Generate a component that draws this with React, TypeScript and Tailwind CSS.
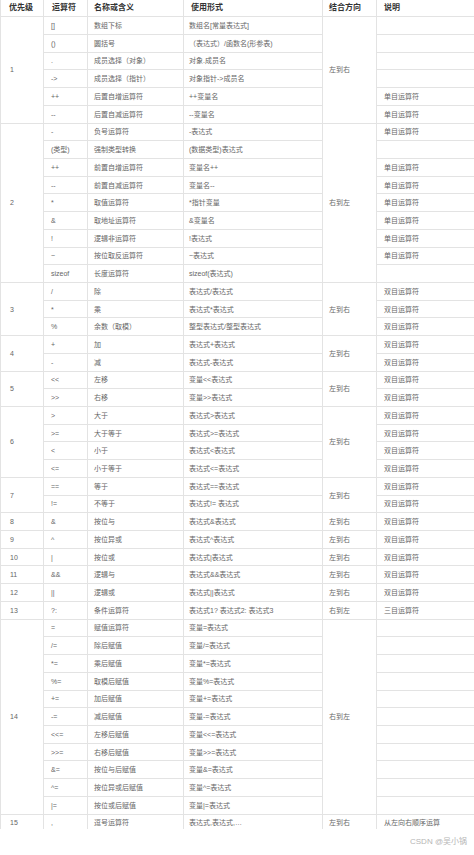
import React from "react";

type Row = [string, string, string, string];

interface Group {
  level: string;
  dir: string;
  rows: Row[];
}

const groups: Group[] = [
  {
    level: "1",
    dir: "左到右",
    rows: [
      ["[]", "数组下标", "数组名[常量表达式]", ""],
      ["()", "圆括号", "（表达式）/函数名(形参表)", ""],
      [".", "成员选择（对象）", "对象.成员名", ""],
      ["->", "成员选择（指针）", "对象指针->成员名", ""],
      ["++", "后置自增运算符", "++变量名", "单目运算符"],
      ["--", "后置自减运算符", "--变量名", "单目运算符"],
    ],
  },
  {
    level: "2",
    dir: "右到左",
    rows: [
      ["-", "负号运算符", "-表达式", "单目运算符"],
      ["(类型)", "强制类型转换", "(数据类型)表达式", ""],
      ["++", "前置自增运算符", "变量名++", "单目运算符"],
      ["--", "前置自减运算符", "变量名--", "单目运算符"],
      ["*", "取值运算符", "*指针变量", "单目运算符"],
      ["&", "取地址运算符", "&变量名", "单目运算符"],
      ["!", "逻辑非运算符", "!表达式", "单目运算符"],
      ["~", "按位取反运算符", "~表达式", "单目运算符"],
      ["sizeof", "长度运算符", "sizeof(表达式)", ""],
    ],
  },
  {
    level: "3",
    dir: "左到右",
    rows: [
      ["/", "除", "表达式/表达式", "双目运算符"],
      ["*", "乘", "表达式*表达式", "双目运算符"],
      ["%", "余数（取模）", "整型表达式/整型表达式", "双目运算符"],
    ],
  },
  {
    level: "4",
    dir: "左到右",
    rows: [
      ["+", "加", "表达式+表达式", "双目运算符"],
      ["-", "减", "表达式-表达式", "双目运算符"],
    ],
  },
  {
    level: "5",
    dir: "左到右",
    rows: [
      ["<<", "左移", "变量<<表达式", "双目运算符"],
      [">>", "右移", "变量>>表达式", "双目运算符"],
    ],
  },
  {
    level: "6",
    dir: "左到右",
    rows: [
      [">", "大于", "表达式>表达式", "双目运算符"],
      [">=", "大于等于", "表达式>=表达式", "双目运算符"],
      ["<", "小于", "表达式<表达式", "双目运算符"],
      ["<=", "小于等于", "表达式<=表达式", "双目运算符"],
    ],
  },
  {
    level: "7",
    dir: "左到右",
    rows: [
      ["==", "等于", "表达式==表达式", "双目运算符"],
      ["!=", "不等于", "表达式!= 表达式", "双目运算符"],
    ],
  },
  { level: "8", dir: "左到右", rows: [["&", "按位与", "表达式&表达式", "双目运算符"]] },
  { level: "9", dir: "左到右", rows: [["^", "按位异或", "表达式^表达式", "双目运算符"]] },
  { level: "10", dir: "左到右", rows: [["|", "按位或", "表达式|表达式", "双目运算符"]] },
  { level: "11", dir: "左到右", rows: [["&&", "逻辑与", "表达式&&表达式", "双目运算符"]] },
  { level: "12", dir: "左到右", rows: [["||", "逻辑或", "表达式||表达式", "双目运算符"]] },
  {
    level: "13",
    dir: "右到左",
    rows: [["?:", "条件运算符", "表达式1? 表达式2: 表达式3", "三目运算符"]],
  },
  {
    level: "14",
    dir: "右到左",
    rows: [
      ["=", "赋值运算符", "变量=表达式", ""],
      ["/=", "除后赋值", "变量/=表达式", ""],
      ["*=", "乘后赋值", "变量*=表达式", ""],
      ["%=", "取模后赋值", "变量%=表达式", ""],
      ["+=", "加后赋值", "变量+=表达式", ""],
      ["-=", "减后赋值", "变量-=表达式", ""],
      ["<<=", "左移后赋值", "变量<<=表达式", ""],
      [">>=", "右移后赋值", "变量>>=表达式", ""],
      ["&=", "按位与后赋值", "变量&=表达式", ""],
      ["^=", "按位异或后赋值", "变量^=表达式", ""],
      ["|=", "按位或后赋值", "变量|=表达式", ""],
    ],
  },
  {
    level: "15",
    dir: "左到右",
    rows: [[",", "逗号运算符", "表达式,表达式,…", "从左向右顺序运算"]],
  },
];

const cell = "border border-[#e3e3e3] px-[6px] py-0 text-left align-middle whitespace-nowrap overflow-hidden";

export default function App() {
  return (
    <div className="w-[474px] bg-white font-['Liberation_Sans','Noto_Sans_CJK_SC',sans-serif] text-[#666]">
      <div className="h-[829px] overflow-hidden">
        <table className="w-[474px] table-fixed border-collapse text-[7px] leading-none">
          <colgroup>
            <col className="w-[43px]" />
            <col className="w-[44px]" />
            <col className="w-[96px]" />
            <col className="w-[139px]" />
            <col className="w-[54px]" />
            <col className="w-[98px]" />
          </colgroup>
          <thead>
            <tr className="h-[16.7px] text-[8px] font-bold text-[#333]">
              <th className={`${cell} border-t-0 pl-[8px]`}>优先级</th>
              <th className={`${cell} border-t-0 pl-[8px]`}>运算符</th>
              <th className={`${cell} border-t-0`}>名称或含义</th>
              <th className={`${cell} border-t-0 pl-[7px]`}>使用形式</th>
              <th className={`${cell} border-t-0`}>结合方向</th>
              <th className={`${cell} border-t-0 pl-[7px]`}>说明</th>
            </tr>
          </thead>
          <tbody>
            {groups.map((g) =>
              g.rows.map((r, i) => (
                <tr key={g.level + "-" + i} className="h-[17.72px]">
                  {i === 0 && (
                    <td rowSpan={g.rows.length} className={`${cell} pl-[9px]`}>
                      {g.level}
                    </td>
                  )}
                  <td className={`${cell} pl-[7px]`}>{r[0]}</td>
                  <td className={cell}>{r[1]}</td>
                  <td className={`${cell} pl-[5px]`}>{r[2]}</td>
                  {i === 0 && (
                    <td rowSpan={g.rows.length} className={cell}>
                      {g.dir}
                    </td>
                  )}
                  <td className={`${cell} pl-[7px]`}>{r[3]}</td>
                </tr>
              ))
            )}
          </tbody>
        </table>
      </div>
      <div className="flex h-[26px] items-center justify-end pr-[7px] text-[8px] text-[#b5b5b5]">
        CSDN @吴小锅
      </div>
    </div>
  );
}
